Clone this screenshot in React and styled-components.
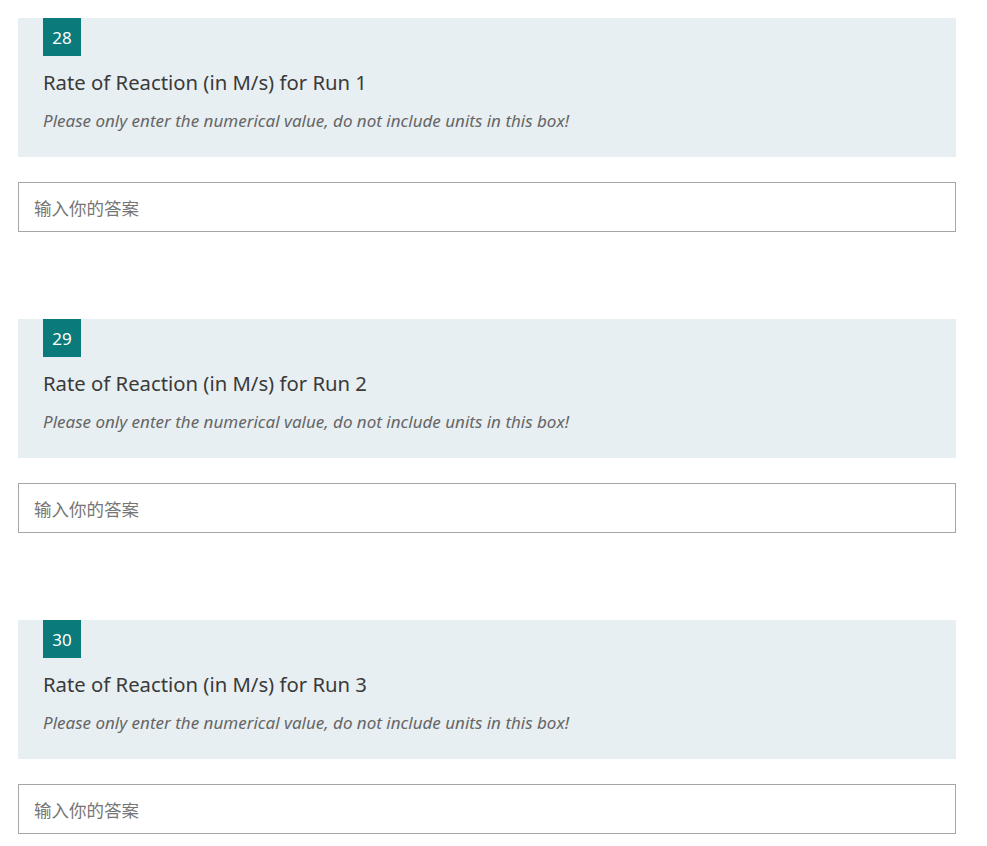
import React from 'react';
import styled, { createGlobalStyle } from "styled-components";

const Global = createGlobalStyle`
    body {
        margin: 0;
        background: #fff;
        font-family: "Segoe UI", "Noto Sans", "Noto Sans CJK SC", sans-serif;
    }
`;

const Page = styled.div`
    display: flex;
    flex-direction: column;
    gap: 87px;
    padding: 18px 31px 18px 18px;
`;

const Question = styled.div`
    display: flex;
    flex-direction: column;
    gap: 25px;
`;

const Card = styled.div`
    background-color: #e8eff2;
    padding: 0 25px 24px;
`;

const Badge = styled.div`
    width: 38px;
    height: 38px;
    background: #0a7a7a;
    color: #fff;
    font-size: 17px;
    display: flex;
    align-items: center;
    justify-content: center;
`;

const Title = styled.div`
    margin-top: 12px;
    font-size: 20.3px;
    line-height: 28px;
    color: #3a3a3a;
`;

const Hint = styled.div`
    margin-top: 13px;
    font-size: 17px;
    line-height: 24px;
    font-style: italic;
    color: #666;
`;

const Answer = styled.input`
    box-sizing: border-box;
    width: 100%;
    height: 50px;
    border: 1px solid #a6a6a6;
    padding: 0 15px;
    font-family: "Noto Sans CJK SC", "Noto Sans", sans-serif;
    font-size: 17.5px;
    color: #333;
    outline: none;
    &::placeholder {
        color: #767676;
    }
`;

const questions = [
    { num: 28, run: 1 },
    { num: 29, run: 2 },
    { num: 30, run: 3 },
];

const App = () => {
    return (
        <Page>
            <Global />
            {questions.map(q => (
                <Question key={q.num}>
                    <Card>
                        <Badge>{q.num}</Badge>
                        <Title>Rate of Reaction (in M/s) for Run {q.run}</Title>
                        <Hint>Please only enter the numerical value, do not include units in this box!</Hint>
                    </Card>
                    <Answer placeholder="输入你的答案" />
                </Question>
            ))}
        </Page>
    )
}

export default App;
